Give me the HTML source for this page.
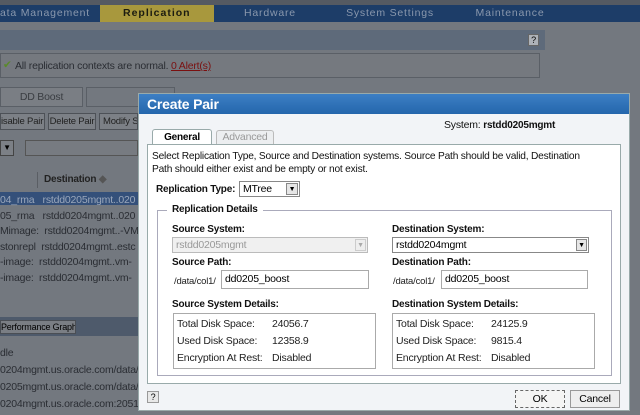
<!DOCTYPE html><html><head><style>
*{margin:0;padding:0;box-sizing:border-box}
body{width:640px;height:415px;overflow:hidden;background:#73787f;font-family:"Liberation Sans",sans-serif;font-size:10.5px;letter-spacing:-0.2px;position:relative}
.a{position:absolute;white-space:nowrap}
.bg{color:#2a2d33}
b,.b{font-weight:bold;font-size:10px}
</style></head><body>
<div class="a" style="left:0;top:0;width:640px;height:5px;background:#555a62"></div>
<div class="a" style="left:0;top:5px;width:640px;height:17px;background:#1d3d68"></div>
<div class="a" style="left:100px;top:5px;width:114px;height:17px;background:#a8983d"></div>
<div class="a" style="left:0;top:7px;color:#8a98ad;letter-spacing:0.8px">ata Management</div>
<div class="a" style="left:123px;top:7px;font-weight:bold;color:#1b1b10;letter-spacing:1px">Replication</div>
<div class="a" style="left:200px;top:7px;color:#8a98ad;letter-spacing:0.8px;width:140px;text-align:center">Hardware</div>
<div class="a" style="left:340px;top:7px;color:#8a98ad;letter-spacing:0.8px;width:100px;text-align:center">System Settings</div>
<div class="a" style="left:455px;top:7px;color:#8a98ad;letter-spacing:0.8px;width:110px;text-align:center">Maintenance</div>
<div class="a" style="left:0;top:30px;width:545px;height:20px;background:#5e6a7a"></div>
<div class="a" style="left:528px;top:34px;width:11px;height:12px;background:#aeb2b8;border:1px solid #666;font-size:9px;text-align:center;line-height:10px">?</div>
<div class="a" style="left:0;top:53px;width:540px;height:25px;border:1px solid #5a5f66;background:#75797f"></div>
<div class="a" style="left:3px;top:59px;color:#5a8a2a">✔</div>
<div class="a bg" style="left:15px;top:60px">All replication contexts are normal.</div>
<div class="a" style="left:171px;top:60px;color:#7a1010;text-decoration:underline">0 Alert(s)</div>
<div class="a" style="left:0;top:87px;width:83px;height:20px;border:1px solid #5a5f66;background:#7a7e84;color:#3a3d42;text-align:center;line-height:18px">DD Boost</div>
<div class="a" style="left:86px;top:87px;width:89px;height:20px;border:1px solid #5a5f66"></div>
<div class="a" style="left:0;top:113px;width:45px;height:17px;border:1px solid #4d5157;background:#7c8086;font-size:9.5px;line-height:15px;color:#222">isable Pair</div>
<div class="a" style="left:48px;top:113px;width:48px;height:17px;border:1px solid #4d5157;background:#7c8086;font-size:9.5px;line-height:15px;text-align:center;color:#222">Delete Pair</div>
<div class="a" style="left:99px;top:113px;width:39px;height:17px;border:1px solid #4d5157;background:#7c8086;font-size:9.5px;line-height:15px;padding-left:3px;overflow:hidden;color:#222">Modify Se</div>
<div class="a" style="left:0;top:140px;width:14px;height:16px;border:1px solid #444;background:#7c8086;font-size:8px;text-align:center;line-height:14px">▼</div>
<div class="a" style="left:25px;top:140px;width:113px;height:16px;border:1px solid #555;background:#777b81"></div>
<div class="a" style="left:37px;top:172px;width:1px;height:16px;background:#5a5e64"></div>
<div class="a b" style="left:44px;top:174px;color:#222">Destination <span style="color:#555">◆</span></div>
<div class="a" style="left:0;top:192px;width:138px;height:13px;background:#34507a"></div>
<div class="a" style="left:0;top:193px;line-height:15.5px;color:#2a2d33;white-space:pre"><span style="color:#9aa7bb">04_rma   rstdd0205mgmt..020</span>
05_rma   rstdd0204mgmt..020
Mimage:  rstdd0204mgmt..-VM
stonrepl  rstdd0204mgmt..estc
-image:  rstdd0204mgmt..vm-
-image:  rstdd0204mgmt..vm-</div>
<div class="a" style="left:0;top:317px;width:138px;height:19px;background:#4e5a6b"></div>
<div class="a" style="left:0;top:320px;width:76px;height:14px;background:#7a7e84;border:1px solid #4a4e54;font-size:9px;line-height:12px;overflow:hidden">Performance Graph</div>
<div class="a bg" style="left:0;top:345px;line-height:17px;white-space:pre">dle
0204mgmt.us.oracle.com/data/
0205mgmt.us.oracle.com/data/
0204mgmt.us.oracle.com:2051</div>

<!-- dialog -->
<div class="a" style="left:138px;top:93px;width:492px;height:318px;background:#f2f4f7;border:1px solid #9aa"></div>
<div class="a" style="left:139px;top:94px;width:490px;height:20px;background:linear-gradient(#3d7fc4,#2466ac)"></div>
<div class="a" style="left:147px;top:96px;color:#fff;font-weight:bold;font-size:14px">Create Pair</div>
<div class="a" style="left:444px;top:119px;color:#111">System: <b>rstdd0205mgmt</b></div>
<div class="a b" style="left:152px;top:129px;width:60px;height:16px;border:1px solid #9aa;border-bottom:none;background:#fff;border-radius:3px 3px 0 0;text-align:center;line-height:15px">General</div>
<div class="a" style="left:216px;top:130px;width:58px;height:14px;border:1px solid #bbb;border-bottom:none;background:#eceef0;color:#999;text-align:center;line-height:13px;border-radius:3px 3px 0 0">Advanced</div>
<div class="a" style="left:147px;top:144px;width:474px;height:240px;border:1px solid #9aa;background:#fff"></div>
<div class="a" style="left:152px;top:150px;color:#111;line-height:13px;font-size:10.2px">Select Replication Type, Source and Destination systems. Source Path should be valid, Destination<br>Path should either exist and be empty or not exist.</div>
<div class="a b" style="left:156px;top:184px;color:#111">Replication Type:</div>
<div class="a" style="left:239px;top:181px;width:61px;height:16px;border:1px solid #888;padding-left:3px;line-height:14px">MTree</div>
<div class="a" style="left:286px;top:183px;width:12px;height:12px;border:1px solid #888;background:#e6e6e6;font-size:7px;text-align:center;line-height:11px">▼</div>
<div class="a" style="left:157px;top:210px;width:455px;height:166px;border:1px solid #aab"></div>
<div class="a b" style="left:167px;top:204px;background:#fff;padding:0 5px;color:#111">Replication Details</div>
<div class="a b" style="left:172px;top:224px;color:#111">Source System:</div>
<div class="a" style="left:172px;top:237px;width:196px;height:16px;border:1px solid #bbb;background:#f0f0f0;color:#999;padding-left:3px;line-height:14px">rstdd0205mgmt</div>
<div class="a" style="left:355px;top:239px;width:11px;height:12px;border:1px solid #ccc;background:#eee;font-size:7px;color:#aaa;text-align:center;line-height:11px">▼</div>
<div class="a b" style="left:172px;top:257px;color:#111">Source Path:</div>
<div class="a" style="left:174px;top:276px;color:#222;font-size:9.5px">/data/col1/</div>
<div class="a" style="left:221px;top:270px;width:148px;height:19px;border:1px solid #aaa;padding-left:3px;line-height:16px">dd0205_boost</div>
<div class="a b" style="left:172px;top:299px;color:#111">Source System Details:</div>
<div class="a" style="left:173px;top:313px;width:203px;height:56px;border:1px solid #aaa"></div>
<div class="a" style="left:177px;top:316px;line-height:17px;color:#222;white-space:pre">Total Disk Space:
Used Disk Space:
Encryption At Rest:</div>
<div class="a" style="left:272px;top:316px;line-height:17px;color:#222;white-space:pre">24056.7
12358.9
Disabled</div>
<div class="a b" style="left:392px;top:224px;color:#111">Destination System:</div>
<div class="a" style="left:392px;top:237px;width:197px;height:16px;border:1px solid #888;padding-left:3px;line-height:14px">rstdd0204mgmt</div>
<div class="a" style="left:576px;top:239px;width:11px;height:12px;border:1px solid #888;background:#e6e6e6;font-size:7px;text-align:center;line-height:11px">▼</div>
<div class="a b" style="left:392px;top:257px;color:#111">Destination Path:</div>
<div class="a" style="left:393px;top:276px;color:#222;font-size:9.5px">/data/col1/</div>
<div class="a" style="left:441px;top:270px;width:147px;height:19px;border:1px solid #aaa;padding-left:3px;line-height:16px">dd0205_boost</div>
<div class="a b" style="left:392px;top:299px;color:#111">Destination System Details:</div>
<div class="a" style="left:392px;top:313px;width:203px;height:56px;border:1px solid #aaa"></div>
<div class="a" style="left:396px;top:316px;line-height:17px;color:#222;white-space:pre">Total Disk Space:
Used Disk Space:
Encryption At Rest:</div>
<div class="a" style="left:491px;top:316px;line-height:17px;color:#222;white-space:pre">24125.9
9815.4
Disabled</div>
<div class="a" style="left:147px;top:391px;width:12px;height:12px;border:1px solid #999;background:#e8e8e8;font-size:9px;text-align:center;line-height:10px">?</div>
<div class="a" style="left:515px;top:390px;width:50px;height:18px;border:1px dashed #666;background:#f4f4f4;text-align:center;line-height:16px">OK</div>
<div class="a" style="left:570px;top:390px;width:50px;height:18px;border:1px solid #999;background:#eee;text-align:center;line-height:16px">Cancel</div>
</body></html>
